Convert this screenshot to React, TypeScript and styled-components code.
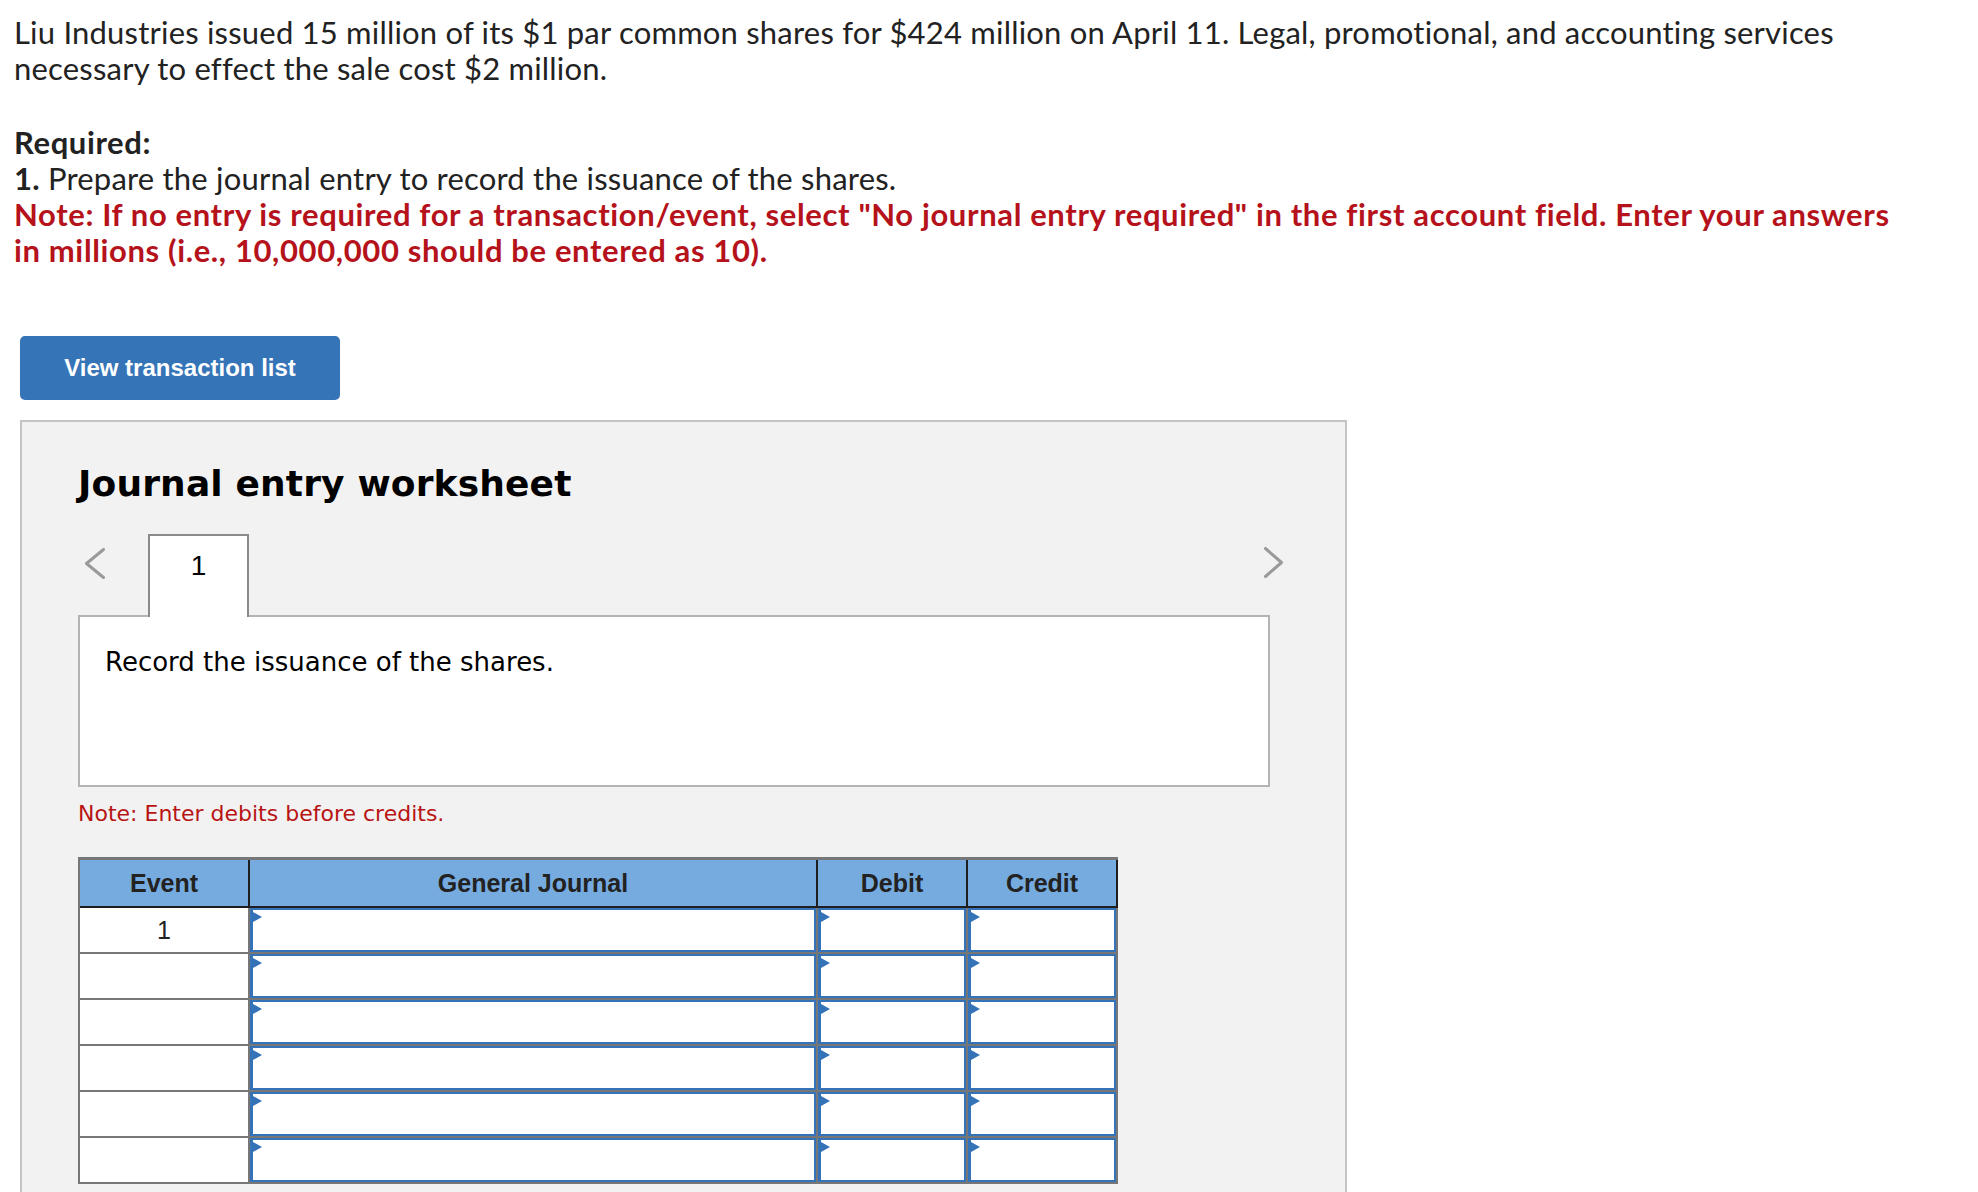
import React from "react";
import styled, { createGlobalStyle } from "styled-components";

const GlobalStyle = createGlobalStyle`
  body {
    margin: 0;
    background: #ffffff;
    font-family: "Lato", "Liberation Sans", sans-serif;
  }
`;

const ROWS = 6;

const App = () => {
  return (
    <Page>
      <GlobalStyle />
      <Prompt>
        <Lead>
          Liu Industries issued 15 million of its $1 par common shares for $424 million on April 11. Legal, promotional, and accounting services
          <br />
          necessary to effect the sale cost $2 million.
        </Lead>
        <Required>
          <RequiredTitle>Required:</RequiredTitle>
          <Step>
            <b>1.</b> Prepare the journal entry to record the issuance of the shares.
          </Step>
          <Warning>
            Note: If no entry is required for a transaction/event, select "No journal entry required" in the first account field. Enter your answers
            <br />
            in millions (i.e., 10,000,000 should be entered as 10).
          </Warning>
        </Required>
      </Prompt>

      <ViewButton type="button">View transaction list</ViewButton>

      <Worksheet>
        <WorksheetTitle>Journal entry worksheet</WorksheetTitle>
        <TabRow>
          <NavArrow side="left">
            <svg width="20" height="31" viewBox="0 0 20 31">
              <polyline points="18.5,1.5 1.5,15.5 18.5,29.5" fill="none" stroke="#9a9a9a" strokeWidth="3" strokeLinecap="round" strokeLinejoin="round" />
            </svg>
          </NavArrow>
          <Tab>1</Tab>
          <NavArrow side="right">
            <svg width="20" height="31" viewBox="0 0 20 31">
              <polyline points="1.5,1.5 17.5,15.5 1.5,29.5" fill="none" stroke="#9a9a9a" strokeWidth="3" strokeLinecap="round" strokeLinejoin="round" />
            </svg>
          </NavArrow>
        </TabRow>
        <EntryBox>
          <EntryText>Record the issuance of the shares.</EntryText>
        </EntryBox>
        <DebitNote>Note: Enter debits before credits.</DebitNote>

        <JournalGrid>
          <HeaderCell>Event</HeaderCell>
          <HeaderCell>General Journal</HeaderCell>
          <HeaderCell>Debit</HeaderCell>
          <HeaderCell>Credit</HeaderCell>
          {Array.from({ length: ROWS }).map((_, i) => (
            <React.Fragment key={i}>
              <EventCell>{i === 0 ? "1" : ""}</EventCell>
              <InputCell>
                <InputBox />
              </InputCell>
              <InputCell>
                <InputBox />
              </InputCell>
              <InputCell>
                <InputBox />
              </InputCell>
            </React.Fragment>
          ))}
        </JournalGrid>
      </Worksheet>
    </Page>
  );
};

export default App;

const Page = styled.div`
  padding: 14px 0 0 14px;
  color: #222222;
`;
const Prompt = styled.div`
  font-size: 31px;
  line-height: 36px;
  letter-spacing: 0.2px;
  white-space: nowrap;
`;
const Lead = styled.p`
  margin: 0;
`;
const Required = styled.div`
  margin-top: 38px;
`;
const RequiredTitle = styled.div`
  font-weight: 700;
  letter-spacing: 0.6px;
`;
const Step = styled.div`
  b {
    font-weight: 700;
  }
`;
const Warning = styled.div`
  font-weight: 700;
  letter-spacing: 0.63px;
  color: #b5121b;
`;
const ViewButton = styled.button`
  display: block;
  margin: 68px 0 0 6px;
  width: 320px;
  height: 64px;
  border: none;
  border-radius: 5px;
  background: #3574b7;
  color: #ffffff;
  font-family: "Liberation Sans", Arial, sans-serif;
  font-weight: 700;
  font-size: 24px;
  cursor: pointer;
`;
const Worksheet = styled.section`
  box-sizing: border-box;
  width: 1327px;
  margin: 20px 0 0 6px;
  padding: 40px 0 40px 56px;
  border: 2px solid #c4c4c4;
  background: #f2f2f2;
`;
const WorksheetTitle = styled.h2`
  margin: 0;
  font-family: "DejaVu Sans", Verdana, sans-serif;
  font-weight: 700;
  font-size: 36px;
  line-height: 44px;
  letter-spacing: 0.15px;
  color: #000000;
`;
const TabRow = styled.div`
  display: flex;
  align-items: flex-start;
  width: 1192px;
  height: 81px;
  margin-top: 28px;
`;
const NavArrow = styled.div<{ side: "left" | "right" }>`
  box-sizing: border-box;
  display: flex;
  cursor: pointer;
  ${({ side }) =>
    side === "left"
      ? `width: 70px; padding: 14px 0 0 7px;`
      : `margin-left: auto; margin-right: -14px; padding-top: 13px;`}
`;
const Tab = styled.div`
  position: relative;
  z-index: 1;
  box-sizing: border-box;
  width: 101px;
  height: 83px;
  padding-top: 14px;
  border: 2px solid #8a8a8a;
  border-bottom: none;
  background: #ffffff;
  text-align: center;
  font-family: "Liberation Sans", Arial, sans-serif;
  font-size: 28px;
  line-height: 32px;
  color: #000000;
`;
const EntryBox = styled.div`
  box-sizing: border-box;
  width: 1192px;
  height: 172px;
  padding: 29px 25px;
  border: 2px solid #b4b4b4;
  background: #ffffff;
`;
const EntryText = styled.p`
  margin: 0;
  font-family: "DejaVu Sans", Verdana, sans-serif;
  font-size: 26px;
  line-height: 32px;
  color: #000000;
`;
const DebitNote = styled.p`
  margin: 13px 0 0;
  font-family: "DejaVu Sans", Verdana, sans-serif;
  font-size: 22px;
  line-height: 28px;
  color: #b81414;
`;
const JournalGrid = styled.div`
  display: grid;
  grid-template-columns: 170px 568px 150px 150px;
  width: fit-content;
  margin-top: 29px;
  border-top: 3px solid #777777;
  border-left: 2px solid #777777;
  font-family: "Liberation Sans", Arial, sans-serif;
  font-size: 25px;
  color: #222222;
`;
const HeaderCell = styled.div`
  box-sizing: border-box;
  height: 48px;
  display: flex;
  align-items: center;
  justify-content: center;
  background: #76abe0;
  border-right: 2px solid #1e1e1e;
  border-bottom: 2px solid #1e1e1e;
  font-weight: 700;
`;
const EventCell = styled.div`
  box-sizing: border-box;
  height: 46px;
  display: flex;
  align-items: center;
  justify-content: center;
  background: #ffffff;
  border-right: 2px solid #777777;
  border-bottom: 2px solid #777777;
`;
const InputCell = styled.div`
  box-sizing: border-box;
  height: 46px;
  display: flex;
  background: #ffffff;
  border-right: 2px solid #777777;
  border-bottom: 2px solid #777777;
`;
const InputBox = styled.div`
  position: relative;
  flex: 1;
  box-sizing: border-box;
  border: 2px solid #3573b9;
  border-left-width: 3px;
  background: #ffffff;

  &::before {
    content: "";
    position: absolute;
    top: 2px;
    left: 0;
    border-top: 5px solid transparent;
    border-bottom: 5px solid transparent;
    border-left: 9px solid #3573b9;
  }
`;
